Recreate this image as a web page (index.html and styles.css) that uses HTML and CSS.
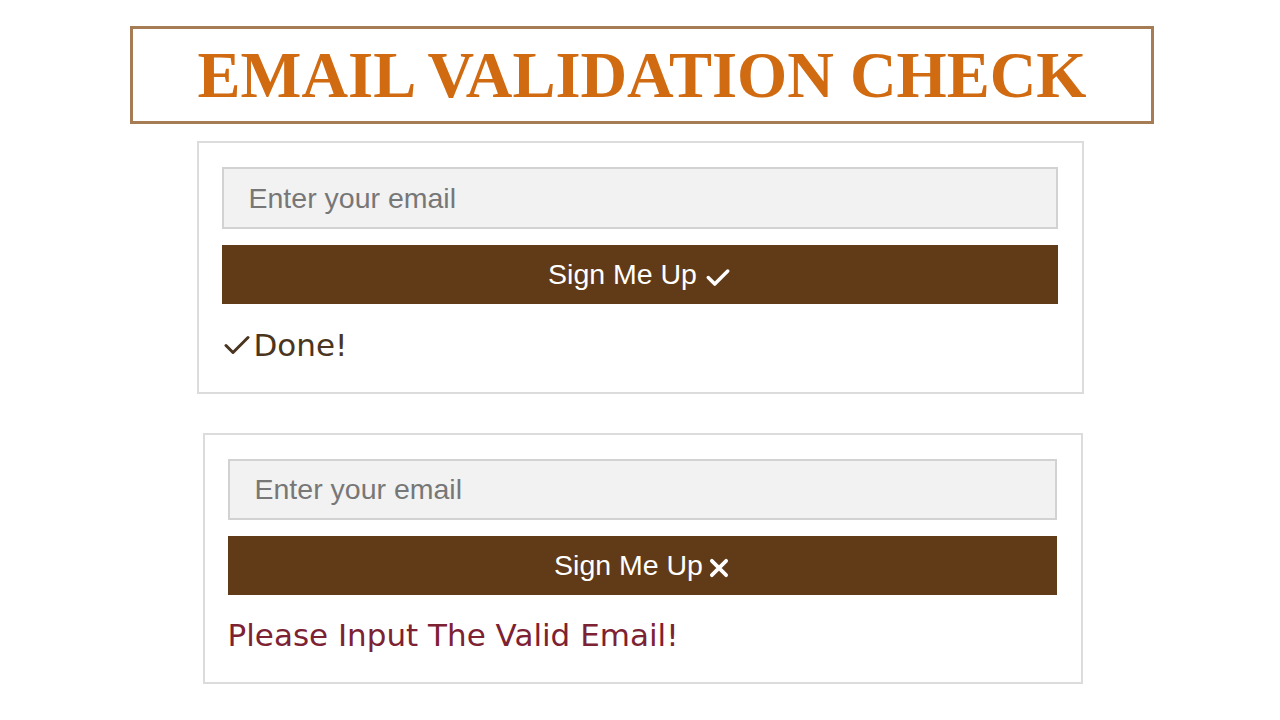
FILE: index.html
```html
<!DOCTYPE html>
<html lang="en">
<head>
<meta charset="utf-8">
<title>Email Validation Check</title>
<link rel="stylesheet" href="styles.css">
</head>
<body>
<main class="page">
  <header class="title-box">
    <h1 class="title">EMAIL VALIDATION CHECK</h1>
  </header>

  <section class="card card-ok">
    <div class="field">Enter your email</div>
    <button class="btn" type="button">
      <span>Sign Me Up</span>
      <svg class="btn-icon check" viewBox="0 0 24 24" aria-hidden="true"><path d="M3 12.5l6 6L21 6.5"/></svg>
    </button>
    <p class="msg msg-ok"><svg class="done-icon" viewBox="0 0 26 20" aria-hidden="true"><path d="M2 10.5l7 7L24 2.5"/></svg>Done!</p>
  </section>

  <section class="card card-err">
    <div class="field">Enter your email</div>
    <button class="btn" type="button">
      <span>Sign Me Up</span>
      <svg class="btn-icon cross" viewBox="0 0 20 20" aria-hidden="true"><path d="M3.5 3.5l13 13M16.5 3.5l-13 13"/></svg>
    </button>
    <p class="msg msg-err">Please Input The Valid Email!</p>
  </section>
</main>
</body>
</html>
```

FILE: styles.css
```css
html, body {
  margin: 0;
  padding: 0;
  background: #ffffff;
}

body {
  font-family: "Liberation Sans", Arial, sans-serif;
}

.page {
  width: 1280px;
  height: 720px;
  display: flex;
  flex-direction: column;
  align-items: center;
  padding: 26px 0 0 4px;
  box-sizing: border-box;
}

.title-box {
  width: 1024px;
  height: 98px;
  box-sizing: border-box;
  border: 3px solid #a67c55;
  display: flex;
  align-items: center;
  justify-content: center;
}

.title {
  margin: 0;
  padding-top: 2px;
  font-family: "Liberation Serif", "Times New Roman", serif;
  font-weight: bold;
  font-size: 64.5px;
  line-height: 1;
  color: #d16b12;
  letter-spacing: 0;
}

.card {
  box-sizing: border-box;
  border: 2px solid #dcdcdc;
  padding: 24px 24px 0 23px;
  display: flex;
  flex-direction: column;
}

.card-ok {
  width: 887px;
  height: 253px;
  margin-top: 17px;
  margin-left: -4px;
}

.card-err {
  width: 880px;
  height: 251px;
  margin-top: 39px;
  margin-left: 1px;
}

.field {
  height: 62px;
  box-sizing: border-box;
  border: 2px solid #d2d2d2;
  background: #f2f2f2;
  color: #777777;
  font-size: 28.5px;
  display: flex;
  align-items: center;
  padding-left: 25px;
}

.card-err .field {
  height: 61px;
}

.btn {
  margin-top: 16px;
  height: 59px;
  border: none;
  background: #613a17;
  color: #ffffff;
  font-family: "Liberation Sans", Arial, sans-serif;
  font-size: 28.5px;
  display: flex;
  align-items: center;
  justify-content: center;
  gap: 8px;
  padding: 0;
}

.btn-icon {
  fill: none;
  stroke: #ffffff;
  stroke-linecap: round;
  stroke-linejoin: round;
}

.check {
  width: 26px;
  height: 26px;
  stroke-width: 3.2;
  margin-top: 4px;
}

.cross {
  width: 22px;
  height: 22px;
  stroke-width: 3.4;
  margin-top: 4px;
  margin-left: -3px;
}

.msg {
  margin: 21px 0 0 0;
  height: 40px;
  line-height: 40px;
  font-family: "DejaVu Sans", "Noto Sans", sans-serif;
  font-size: 31px;
  display: flex;
  align-items: center;
}

.msg-ok {
  color: #4a3520;
  padding-left: 2px;
}

.msg-err {
  color: #7c2233;
  margin-top: 20px;
}

.done-icon {
  width: 26px;
  height: 20px;
  margin-right: 4px;
  fill: none;
  stroke: #4a3520;
  stroke-width: 3;
  stroke-linecap: round;
  stroke-linejoin: round;
}
```
